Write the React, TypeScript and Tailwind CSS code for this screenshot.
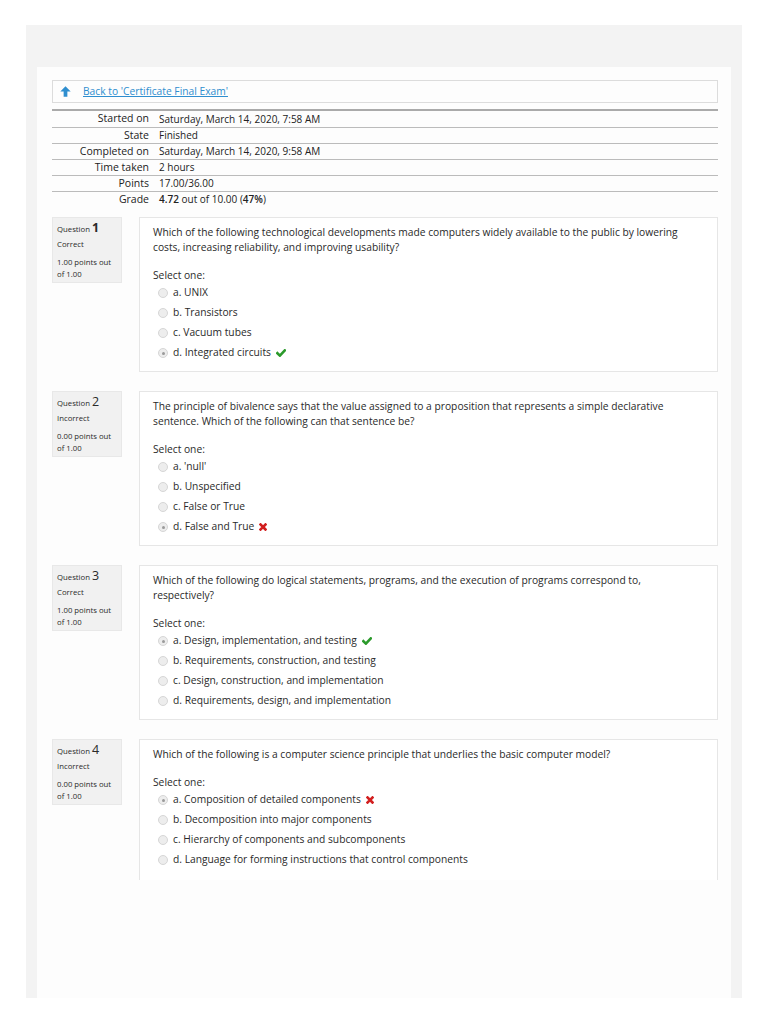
import React from 'react';

type Option = { label: string; checked?: boolean; mark?: 'ok' | 'bad' };
type Question = {
  num: number;
  state: string;
  points: string;
  text: string[];
  options: Option[];
  cut?: boolean;
};

const summary: [string, React.ReactNode][] = [
  ['Started on', 'Saturday, March 14, 2020, 7:58 AM'],
  ['State', 'Finished'],
  ['Completed on', 'Saturday, March 14, 2020, 9:58 AM'],
  ['Time taken', '2 hours'],
  ['Points', '17.00/36.00'],
  [
    'Grade',
    <span>
      <b className="font-semibold">4.72</b> out of 10.00 (<b className="font-semibold">47%</b>)
    </span>,
  ],
];

const questions: Question[] = [
  {
    num: 1,
    state: 'Correct',
    points: '1.00',
    text: [
      'Which of the following technological developments made computers widely available to the public by lowering',
      'costs, increasing reliability, and improving usability?',
    ],
    options: [
      { label: 'a. UNIX' },
      { label: 'b. Transistors' },
      { label: 'c. Vacuum tubes' },
      { label: 'd. Integrated circuits', checked: true, mark: 'ok' },
    ],
  },
  {
    num: 2,
    state: 'Incorrect',
    points: '0.00',
    text: [
      'The principle of bivalence says that the value assigned to a proposition that represents a simple declarative',
      'sentence. Which of the following can that sentence be?',
    ],
    options: [
      { label: "a. 'null'" },
      { label: 'b. Unspecified' },
      { label: 'c. False or True' },
      { label: 'd. False and True', checked: true, mark: 'bad' },
    ],
  },
  {
    num: 3,
    state: 'Correct',
    points: '1.00',
    text: [
      'Which of the following do logical statements, programs, and the execution of programs correspond to,',
      'respectively?',
    ],
    options: [
      { label: 'a. Design, implementation, and testing', checked: true, mark: 'ok' },
      { label: 'b. Requirements, construction, and testing' },
      { label: 'c. Design, construction, and implementation' },
      { label: 'd. Requirements, design, and implementation' },
    ],
  },
  {
    num: 4,
    state: 'Incorrect',
    points: '0.00',
    text: ['Which of the following is a computer science principle that underlies the basic computer model?'],
    options: [
      { label: 'a. Composition of detailed components', checked: true, mark: 'bad' },
      { label: 'b. Decomposition into major components' },
      { label: 'c. Hierarchy of components and subcomponents' },
      { label: 'd. Language for forming instructions that control components' },
    ],
    cut: true,
  },
];

function Radio({ checked }: { checked?: boolean }) {
  return (
    <span className="w-[10px] h-[10px] rounded-full border border-[#d6d6d6] bg-[#ededed] flex items-center justify-center">
      {checked && <span className="w-[3px] h-[3px] rounded-full bg-[#9a9a9a]" />}
    </span>
  );
}

function CheckMark() {
  return (
    <svg width="10" height="8" viewBox="0 0 10 8" className="ml-[5px]">
      <path d="M1.4 4.2 L3.9 6.6 L8.8 1.4" fill="none" stroke="#2b9a2b" strokeWidth="2.6" strokeLinecap="square" strokeLinejoin="miter" />
    </svg>
  );
}

function CrossMark() {
  return (
    <svg width="8" height="8" viewBox="0 0 8 8" className="ml-[5px]">
      <path d="M1.5 1.5 L6.5 6.5 M6.5 1.5 L1.5 6.5" fill="none" stroke="#d21f1f" strokeWidth="2.6" strokeLinecap="square" />
    </svg>
  );
}

function QuestionBlock({ q }: { q: Question }) {
  return (
    <div className="flex gap-[17px] mb-[19px]">
      <div className="w-[70px] h-[66px] shrink-0 bg-[#f1f1f1] border border-[#e8e8e8] pl-[4px] pt-[4px] text-[7.75px] leading-[11px] text-[#2a2a2a]">
        <div className="flex items-baseline gap-[2px]">
          <span>Question</span>
          <span className={'text-[12.5px] leading-[12px] ' + (q.num === 1 ? 'font-bold' : 'font-normal')}>{q.num}</span>
        </div>
        <div className="mt-[4px]">{q.state}</div>
        <div className="mt-[6px] leading-[12px]">
          {q.points} points out
          <br />
          of 1.00
        </div>
      </div>
      <div
        className={
          'flex-1 bg-white border border-[#e6e6e6] pl-[13px] pt-[7px] pb-[8px] ' +
          (q.cut ? 'border-b-0 h-[141px]' : '')
        }
      >
        <div className="text-[10.25px] leading-[15px] text-[#2a2a2a]">
          {q.text.map((t) => (
            <div key={t}>{t}</div>
          ))}
        </div>
        <div className="mt-[13px] text-[10.25px] leading-[15px] text-[#2a2a2a]">Select one:</div>
        <div>
          {q.options.map((o) => (
            <div key={o.label} className="h-[20px] flex items-center text-[10.25px] text-[#2a2a2a]">
              <span className="w-[20px] flex justify-center">
                <Radio checked={o.checked} />
              </span>
              <span>{o.label}</span>
              {o.mark === 'ok' && <CheckMark />}
              {o.mark === 'bad' && <CrossMark />}
            </div>
          ))}
        </div>
      </div>
    </div>
  );
}

export default function App() {
  return (
    <div className="w-[768px] h-[1024px] bg-white pt-[25px] pl-[26px] font-['Open_Sans',sans-serif]">
      <div className="w-[716px] h-[973px] bg-[#f3f3f3] px-[11px] pt-[42px]">
        <div className="h-full bg-[#fdfdfd] pl-[15px] pr-[13px] pt-[13px] overflow-hidden">
          <div className="h-[23px] border border-[#dcdcdc] flex items-center pl-[7px]">
            <svg width="11" height="11" viewBox="0 0 10 10" className="mr-[12px]">
              <path d="M5 0.3 L9.7 5.1 L6.7 5.1 L6.7 9.7 L3.3 9.7 L3.3 5.1 L0.3 5.1 Z" fill="#2f8ecf" />
            </svg>
            <a className="text-[10.25px] text-[#2f8ecf] underline">Back to 'Certificate Final Exam'</a>
          </div>
          <div className="mt-[6px] border-t-2 border-[#aaa] mb-[10px]">
            {summary.map(([k, v], i) => (
              <div
                key={k}
                className={
                  'h-[16px] flex items-center text-[10.5px] text-[#222] ' +
                  (i > 0 ? 'border-t border-[#bbb]' : '')
                }
              >
                <span className="w-[97px] text-right font-medium">{k}</span>
                <span className="ml-[10px] text-[10px]">{v}</span>
              </div>
            ))}
          </div>
          {questions.map((q) => (
            <QuestionBlock key={q.num} q={q} />
          ))}
        </div>
      </div>
    </div>
  );
}
